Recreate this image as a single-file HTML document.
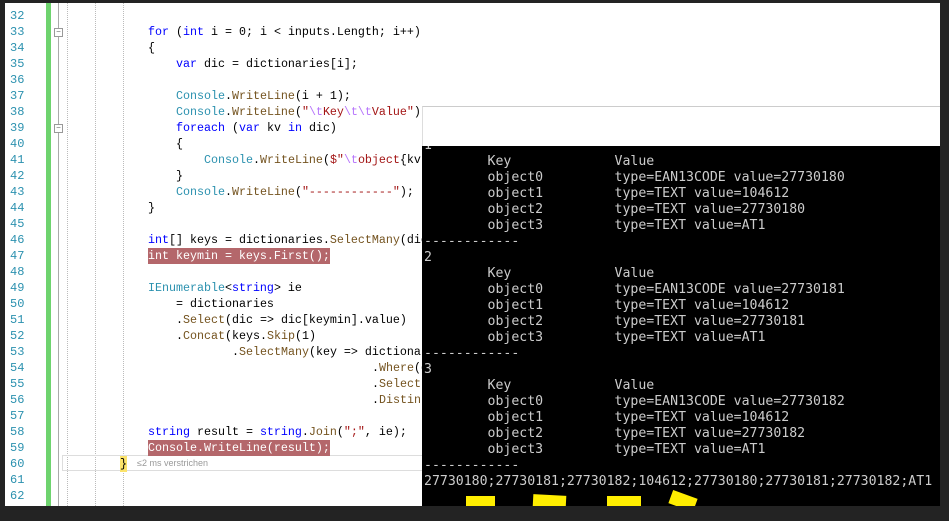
<!DOCTYPE html>
<html><head><meta charset="utf-8"><style>
body{margin:0;width:949px;height:521px;background:#232323;position:relative;overflow:hidden;font-family:"Liberation Mono",monospace}
#ed{position:absolute;left:5px;top:3px;width:935px;height:503px;background:#fff;overflow:hidden}
.ln{position:absolute;left:5px;width:22px;font-size:12px;color:#2b91af;line-height:16px}
.c{position:absolute;font-size:11.67px;line-height:16px;white-space:pre;color:#000}
.k{color:#0000ff}.t{color:#2b91af}.s{color:#a31515}.e{color:#b776fb}.m{color:#74531f}
.hl{background:#b4676b;color:#fff}
.g{position:absolute;top:0;bottom:0;border-left:1px dotted #bbb}
#con{position:absolute;left:422px;top:106px;width:518px;height:400px;background:#000;overflow:hidden}
#tb{position:absolute;left:0;top:0;width:518px;height:39px;background:#fff;border-top:1px solid #ccc;border-left:1px solid #ddd;z-index:2}
.o{position:absolute;font-size:13.2px;line-height:16px;color:#ccc;white-space:pre;left:2px}
.y{position:absolute;background:#ffee00}
</style></head><body>
<div id="ed">
<div style="position:absolute;left:41px;top:0;width:5px;height:503px;background:#6ed36e"></div>
<div style="position:absolute;left:53px;top:0;height:503px;border-left:1px solid #aaa"></div>
<div class="g" style="left:62px"></div><div class="g" style="left:90px"></div><div class="g" style="left:118px"></div>
<div style="position:absolute;left:49px;top:25px;width:7px;height:7px;border:1px solid #999;background:#fff;font-size:8px;line-height:7px;text-align:center;color:#666">−</div>
<div style="position:absolute;left:49px;top:121px;width:7px;height:7px;border:1px solid #999;background:#fff;font-size:8px;line-height:7px;text-align:center;color:#666">−</div>
<div style="position:absolute;left:57px;top:452px;width:400px;height:14px;border:1px solid #ddd"></div>
</div>
<div id="lns"></div>
<div class="c" style="left:148px;top:24px"><span class="k">for</span> (<span class="k">int</span> i = 0; i &lt; inputs.Length; i++)</div>
<div class="c" style="left:148px;top:40px">{</div>
<div class="c" style="left:176px;top:56px"><span class="k">var</span> dic = dictionaries[i];</div>
<div class="c" style="left:176px;top:88px"><span class="t">Console</span>.<span class="m">WriteLine</span>(i + 1);</div>
<div class="c" style="left:176px;top:104px"><span class="t">Console</span>.<span class="m">WriteLine</span>(<span class="s">"<span class="e">\t</span>Key<span class="e">\t\t</span>Value"</span>);</div>
<div class="c" style="left:176px;top:120px"><span class="k">foreach</span> (<span class="k">var</span> kv <span class="k">in</span> dic)</div>
<div class="c" style="left:176px;top:136px">{</div>
<div class="c" style="left:204px;top:152px"><span class="t">Console</span>.<span class="m">WriteLine</span>(<span class="s">$"<span class="e">\t</span>object</span>{kv</div>
<div class="c" style="left:176px;top:168px">}</div>
<div class="c" style="left:176px;top:184px"><span class="t">Console</span>.<span class="m">WriteLine</span>(<span class="s">"------------"</span>);</div>
<div class="c" style="left:148px;top:200px">}</div>
<div class="c" style="left:148px;top:232px"><span class="k">int</span>[] keys = dictionaries.<span class="m">SelectMany</span>(dic</div>
<div class="c hl" style="left:148px;top:248px">int keymin = keys.First();</div>
<div class="c" style="left:148px;top:280px"><span class="t">IEnumerable</span>&lt;<span class="k">string</span>&gt; ie</div>
<div class="c" style="left:176px;top:296px">= dictionaries</div>
<div class="c" style="left:176px;top:312px">.<span class="m">Select</span>(dic =&gt; dic[keymin].value)</div>
<div class="c" style="left:176px;top:328px">.<span class="m">Concat</span>(keys.<span class="m">Skip</span>(1)</div>
<div class="c" style="left:232px;top:344px">.<span class="m">SelectMany</span>(key =&gt; dictionar</div>
<div class="c" style="left:372px;top:360px">.<span class="m">Where</span>(d</div>
<div class="c" style="left:372px;top:376px">.<span class="m">Select</span></div>
<div class="c" style="left:372px;top:392px">.<span class="m">Distin</span></div>
<div class="c" style="left:148px;top:424px"><span class="k">string</span> result = <span class="k">string</span>.<span class="m">Join</span>(<span class="s">";"</span>, ie);</div>
<div class="c hl" style="left:148px;top:440px">Console.WriteLine(result);</div>
<div class="c" style="left:120px;top:456px;background:#fbe36a">}</div>
<div style="position:absolute;left:137px;top:458px;font:9px 'Liberation Sans',sans-serif;color:#999">≤2 ms verstrichen</div>
<div id="con"><div id="tb"></div>
<pre class="o" style="margin:0;top:32px">1
        Key             Value
        object0         type=EAN13CODE value=27730180
        object1         type=TEXT value=104612
        object2         type=TEXT value=27730180
        object3         type=TEXT value=AT1
------------
2
        Key             Value
        object0         type=EAN13CODE value=27730181
        object1         type=TEXT value=104612
        object2         type=TEXT value=27730181
        object3         type=TEXT value=AT1
------------
3
        Key             Value
        object0         type=EAN13CODE value=27730182
        object1         type=TEXT value=104612
        object2         type=TEXT value=27730182
        object3         type=TEXT value=AT1
------------
27730180;27730181;27730182;104612;27730180;27730181;27730182;AT1</pre>
<div class="y" style="left:44px;top:390px;width:29px;height:12px"></div>
<div class="y" style="left:111px;top:389px;width:33px;height:13px;transform:rotate(3deg)"></div>
<div class="y" style="left:185px;top:390px;width:34px;height:12px"></div>
<div class="y" style="left:248px;top:388px;width:26px;height:14px;transform:rotate(20deg)"></div>
</div>
<script>
var h='';for(var n=32;n<=62;n++){h+='<div class="ln" style="top:'+(8+(n-32)*16)+'px;left:10px">'+n+'</div>';}
document.getElementById('lns').outerHTML=h;
</script>
</body></html>
